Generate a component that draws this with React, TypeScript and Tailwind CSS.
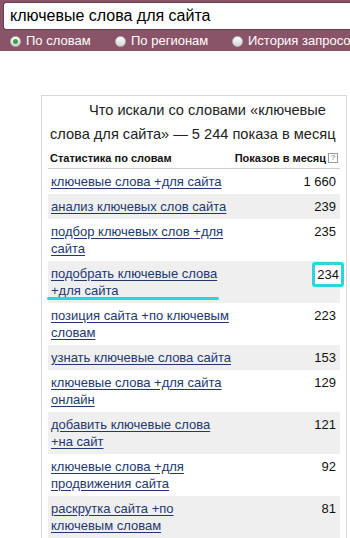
import { useState } from "react";

interface Row {
  phrase: string[];
  count: string;
}

const rows: Row[] = [
  { phrase: ["ключевые слова +для сайта"], count: "1 660" },
  { phrase: ["анализ ключевых слов сайта"], count: "239" },
  { phrase: ["подбор ключевых слов +для", "сайта"], count: "235" },
  { phrase: ["подобрать ключевые слова", "+для сайта"], count: "234" },
  { phrase: ["позиция сайта +по ключевым", "словам"], count: "223" },
  { phrase: ["узнать ключевые слова сайта"], count: "153" },
  { phrase: ["ключевые слова +для сайта", "онлайн"], count: "129" },
  { phrase: ["добавить ключевые слова", "+на сайт"], count: "121" },
  { phrase: ["ключевые слова +для", "продвижения сайта"], count: "92" },
  { phrase: ["раскрутка сайта +по", "ключевым словам"], count: "81" },
];

function Radio({ checked }: { checked?: boolean }) {
  return (
    <span className="w-[11px] h-[11px] rounded-full bg-gradient-to-b from-white to-[#d4d4d4] border border-[#b9b9b9] flex items-center justify-center shrink-0">
      {checked && <span className="w-[5px] h-[5px] rounded-full bg-[#3aa14a]" />}
    </span>
  );
}

export default function App() {
  const [query, setQuery] = useState("ключевые слова для сайта");
  const [mode, setMode] = useState("words");

  return (
    <div className="w-[350px] h-[538px] overflow-hidden bg-white font-['Liberation_Sans',Arial,sans-serif]">
      <div className="bg-[#8a5468] pl-[3px] pt-[2px] h-[51px] overflow-hidden">
        <input
          value={query}
          onChange={(e) => setQuery(e.target.value)}
          className="w-[347px] h-[28px] bg-white border border-[#6e3d50] border-r-0 rounded-l-[3px] pl-[6px] text-[16px] text-black outline-none"
        />
        <div className="flex items-center h-[20px] mt-[1px] text-[13px] text-white whitespace-nowrap">
          <label className="flex items-center gap-[5px] pl-[7px] w-[112px] shrink-0" onClick={() => setMode("words")}>
            <Radio checked={mode === "words"} />
            По словам
          </label>
          <label className="flex items-center gap-[5px] w-[117px] shrink-0" onClick={() => setMode("regions")}>
            <Radio checked={mode === "regions"} />
            По регионам
          </label>
          <label className="flex items-center gap-[5px] shrink-0" onClick={() => setMode("history")}>
            <Radio checked={mode === "history"} />
            История запросов
          </label>
        </div>
      </div>

      <div className="mt-[44px] ml-[41px] w-[306px] border-t border-l border-r border-[#d8d8d8] pl-[6px] pr-[6px] pt-[2px]">
        <div className="text-[14.6px] leading-[24px] text-[#222] whitespace-nowrap">
          <div className="pl-[41px]">Что искали со словами «ключевые</div>
          <div className="pl-[2px]">слова для сайта» — 5 244 показа в месяц</div>
        </div>

        <div className="flex items-end justify-between mt-[4px] pb-[1px] border-b border-[#cfcfcf] text-[11px] font-bold text-[#111] px-[2px]">
          <span>Статистика по словам</span>
          <span className="flex items-center gap-[2px]">
            Показов в месяц
            <span className="w-[10px] h-[10px] border border-[#9a9a9a] text-[8px] leading-[8px] font-normal text-[#777] flex items-center justify-center">
              ?
            </span>
          </span>
        </div>

        <div>
          {rows.map((row, i) => {
            const marked = row.count === "234";
            return (
              <div
                key={i}
                className={`flex justify-between py-[4px] pl-[3px] pr-[4px] ${i % 2 === 1 ? "bg-[#efefef]" : "bg-white"}`}
              >
                <a
                  href="#"
                  className={`text-[13px] leading-[17px] text-[#23386f] underline underline-offset-[2px] ${marked ? "relative" : ""}`}
                >
                  {row.phrase.map((line, j) => (
                    <div key={j}>{line}</div>
                  ))}
                  {marked && (
                    <span className="absolute left-[-4px] top-[32px] w-[172px] h-[3px] rounded-full bg-[#2fd3e0]" />
                  )}
                </a>
                <span
                  className={`text-[13px] leading-[17px] text-[#111] ${marked ? "border-[3px] border-[#2fd3e0] rounded-[3px] px-[2px] -mr-[8px] -mt-[3px] h-[25px] leading-[19px] bg-white" : ""}`}
                >
                  {row.count}
                </span>
              </div>
            );
          })}
        </div>
      </div>
    </div>
  );
}
